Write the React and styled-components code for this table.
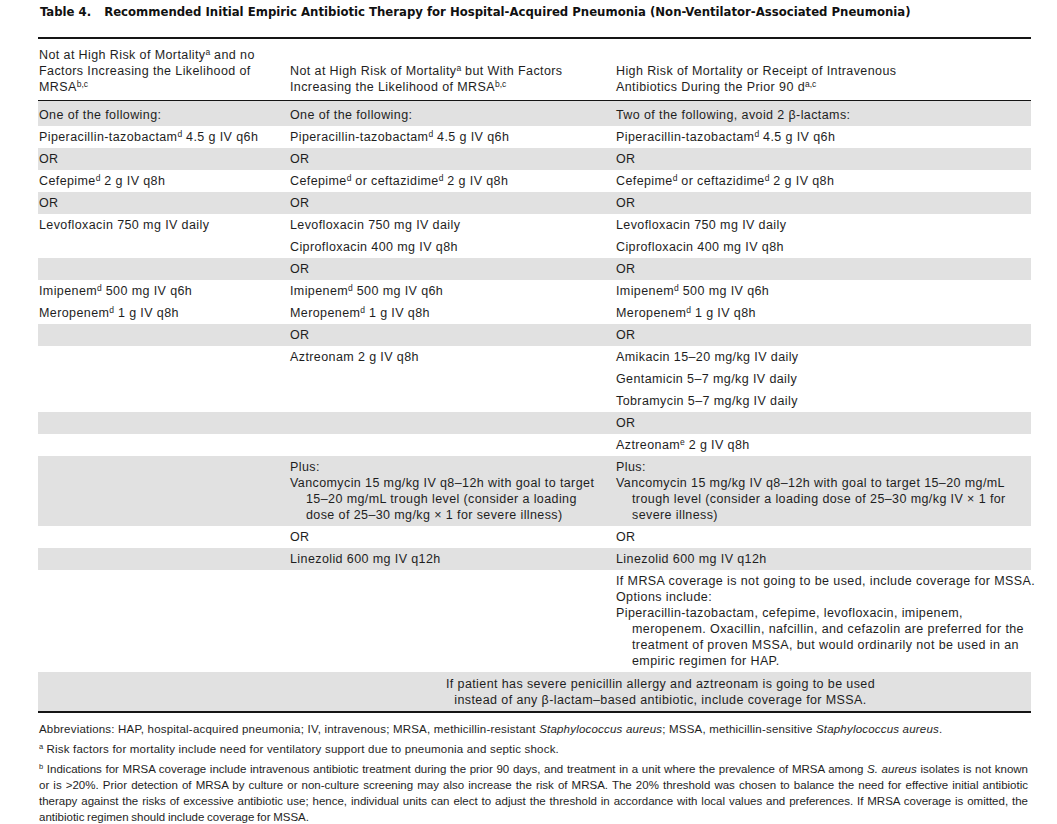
import React from "react";
import styled, { createGlobalStyle } from "styled-components";

const Global = createGlobalStyle`
  html, body { margin: 0; padding: 0; background: #fff; }
  body { font-family: "Liberation Sans", Arial, sans-serif; color: #1e1e1e; }
`;

const Page = styled.div`
  padding: 4px 0 0 38px;
  width: 993px;
`;

const Title = styled.h1`
  margin: 0 0 17px 2px;
  display: flex;
  gap: 13px;
  font-family: "Liberation Sans Narrow", "DejaVu Sans Condensed", "Liberation Sans", sans-serif;
  font-stretch: condensed;
  font-weight: bold;
  font-size: 13px;
  line-height: 16px;
  color: #111;
  white-space: nowrap;
`;

const Table = styled.div`
  border-top: 2px solid #151515;
  border-bottom: 2px solid #151515;
  font-size: 12.5px;
  letter-spacing: 0.4px;
  line-height: 16px;
`;

const Row = styled.div`
  display: grid;
  grid-template-columns: 252px 326px 1fr;
  background: ${(p) => (p.$shade ? "#e1e1e1" : "transparent")};
  padding: ${(p) => p.$pad || "3px 0 3px"};
`;

const HeadRow = styled(Row)`
  align-items: end;
  padding: 8px 0 5px;
  border-bottom: 1px solid #151515;
`;

const Cell = styled.div`
  white-space: nowrap;
  padding-left: ${(p) => (p.$first ? "1px" : "0")};
`;

const SpanCell = styled.div`
  grid-column: 2 / 4;
  text-align: center;
  white-space: nowrap;
`;

const Line = styled.div`
  padding-left: ${(p) => (p.$indent ? "16px" : "0")};
`;

const Sup = styled.sup`
  font-size: 8.5px;
  letter-spacing: 0;
  line-height: 0;
  vertical-align: 4px;
`;

const Notes = styled.div`
  margin-top: 8px;
  width: 989px;
  padding-left: 1px;
  font-size: 11.5px;
  letter-spacing: 0.2px;
  line-height: 16px;
`;

const Note = styled.p`
  margin: 0 0 4px;
`;

const JLine = styled.span`
  display: block;
  white-space: nowrap;
  letter-spacing: 0;
  word-spacing: -0.5px;
  text-align: justify;
  text-align-last: ${(p) => (p.$last ? "left" : "justify")};
`;

const NoteSup = styled.sup`
  font-size: 7.5px;
  letter-spacing: 0;
  line-height: 0;
  vertical-align: 4px;
`;

const d = <Sup>d</Sup>;
const OR = "OR";
const pip = <>Piperacillin-tazobactam{d} 4.5 g IV q6h</>;
const cef2 = <>Cefepime{d} or ceftazidime{d} 2 g IV q8h</>;
const levo = "Levofloxacin 750 mg IV daily";
const cipro = "Ciprofloxacin 400 mg IV q8h";
const imi = <>Imipenem{d} 500 mg IV q6h</>;
const mero = <>Meropenem{d} 1 g IV q8h</>;

const lines = (arr) =>
  arr.map(([text, indent], i) => (
    <Line key={i} $indent={indent}>
      {text}
    </Line>
  ));

const plus2 = lines([
  ["Plus:"],
  ["Vancomycin 15 mg/kg IV q8–12h with goal to target"],
  ["15–20 mg/mL trough level (consider a loading", true],
  ["dose of 25–30 mg/kg × 1 for severe illness)", true],
]);

const plus3 = lines([
  ["Plus:"],
  ["Vancomycin 15 mg/kg IV q8–12h with goal to target 15–20 mg/mL"],
  ["trough level (consider a loading dose of 25–30 mg/kg IV × 1 for", true],
  ["severe illness)", true],
]);

const mssa = lines([
  ["If MRSA coverage is not going to be used, include coverage for MSSA."],
  ["Options include:"],
  ["Piperacillin-tazobactam, cefepime, levofloxacin, imipenem,"],
  ["meropenem. Oxacillin, nafcillin, and cefazolin are preferred for the", true],
  ["treatment of proven MSSA, but would ordinarily not be used in an", true],
  ["empiric regimen for HAP.", true],
]);

const rows = [
  { shade: true, pad: "6px 0 3px", cells: ["One of the following:", "One of the following:", "Two of the following, avoid 2 β-lactams:"] },
  { cells: [pip, pip, pip] },
  { shade: true, cells: [OR, OR, OR] },
  { cells: [<>Cefepime{d} 2 g IV q8h</>, cef2, cef2] },
  { shade: true, cells: [OR, OR, OR] },
  { cells: [levo, levo, levo] },
  { cells: ["", cipro, cipro] },
  { shade: true, cells: ["", OR, OR] },
  { cells: [imi, imi, imi] },
  { cells: [mero, mero, mero] },
  { shade: true, cells: ["", OR, OR] },
  { cells: ["", "Aztreonam 2 g IV q8h", "Amikacin 15–20 mg/kg IV daily"] },
  { cells: ["", "", "Gentamicin 5–7 mg/kg IV daily"] },
  { cells: ["", "", "Tobramycin 5–7 mg/kg IV daily"] },
  { shade: true, cells: ["", "", OR] },
  { cells: ["", "", <>Aztreonam<Sup>e</Sup> 2 g IV q8h</>] },
  { shade: true, cells: ["", plus2, plus3] },
  { cells: ["", OR, OR] },
  { shade: true, cells: ["", "Linezolid 600 mg IV q12h", "Linezolid 600 mg IV q12h"] },
  { cells: ["", "", mssa] },
];

export default function App() {
  return (
    <>
      <Global />
      <Page>
        <Title>
          <span>Table 4.</span>
          <span>
            Recommended Initial Empiric Antibiotic Therapy for Hospital-Acquired Pneumonia
            (Non-Ventilator-Associated Pneumonia)
          </span>
        </Title>
        <Table>
          <HeadRow>
            <Cell $first>
              Not at High Risk of Mortality<Sup>a</Sup> and no
              <br />
              Factors Increasing the Likelihood of
              <br />
              MRSA<Sup>b,c</Sup>
            </Cell>
            <Cell>
              Not at High Risk of Mortality<Sup>a</Sup> but With Factors
              <br />
              Increasing the Likelihood of MRSA<Sup>b,c</Sup>
            </Cell>
            <Cell>
              High Risk of Mortality or Receipt of Intravenous
              <br />
              Antibiotics During the Prior 90 d<Sup>a,c</Sup>
            </Cell>
          </HeadRow>
          {rows.map((r, i) => (
            <Row key={i} $shade={r.shade} $pad={r.pad}>
              {r.cells.map((c, j) => (
                <Cell key={j} $first={j === 0}>
                  {c}
                </Cell>
              ))}
            </Row>
          ))}
          <Row $shade $pad="4px 0 3px">
            <Cell $first />
            <SpanCell>
              If patient has severe penicillin allergy and aztreonam is going to be used
              <br />
              instead of any β-lactam–based antibiotic, include coverage for MSSA.
            </SpanCell>
          </Row>
        </Table>
        <Notes>
          <Note>
            Abbreviations: HAP, hospital-acquired pneumonia; IV, intravenous; MRSA, methicillin-resistant{" "}
            <i>Staphylococcus aureus</i>; MSSA, methicillin-sensitive <i>Staphylococcus aureus</i>.
          </Note>
          <Note>
            <NoteSup>a</NoteSup> Risk factors for mortality include need for ventilatory support due to pneumonia and
            septic shock.
          </Note>
          <Note>
            <JLine>
              <NoteSup>b</NoteSup> Indications for MRSA coverage include intravenous antibiotic treatment during the
              prior 90 days, and treatment in a unit where the prevalence of MRSA among <i>S. aureus</i> isolates is
              not known
            </JLine>
            <JLine>
              or is &gt;20%. Prior detection of MRSA by culture or non-culture screening may also increase the risk of
              MRSA. The 20% threshold was chosen to balance the need for effective initial antibiotic
            </JLine>
            <JLine>
              therapy against the risks of excessive antibiotic use; hence, individual units can elect to adjust the
              threshold in accordance with local values and preferences. If MRSA coverage is omitted, the
            </JLine>
            <JLine $last>antibiotic regimen should include coverage for MSSA.</JLine>
          </Note>
        </Notes>
      </Page>
    </>
  );
}
